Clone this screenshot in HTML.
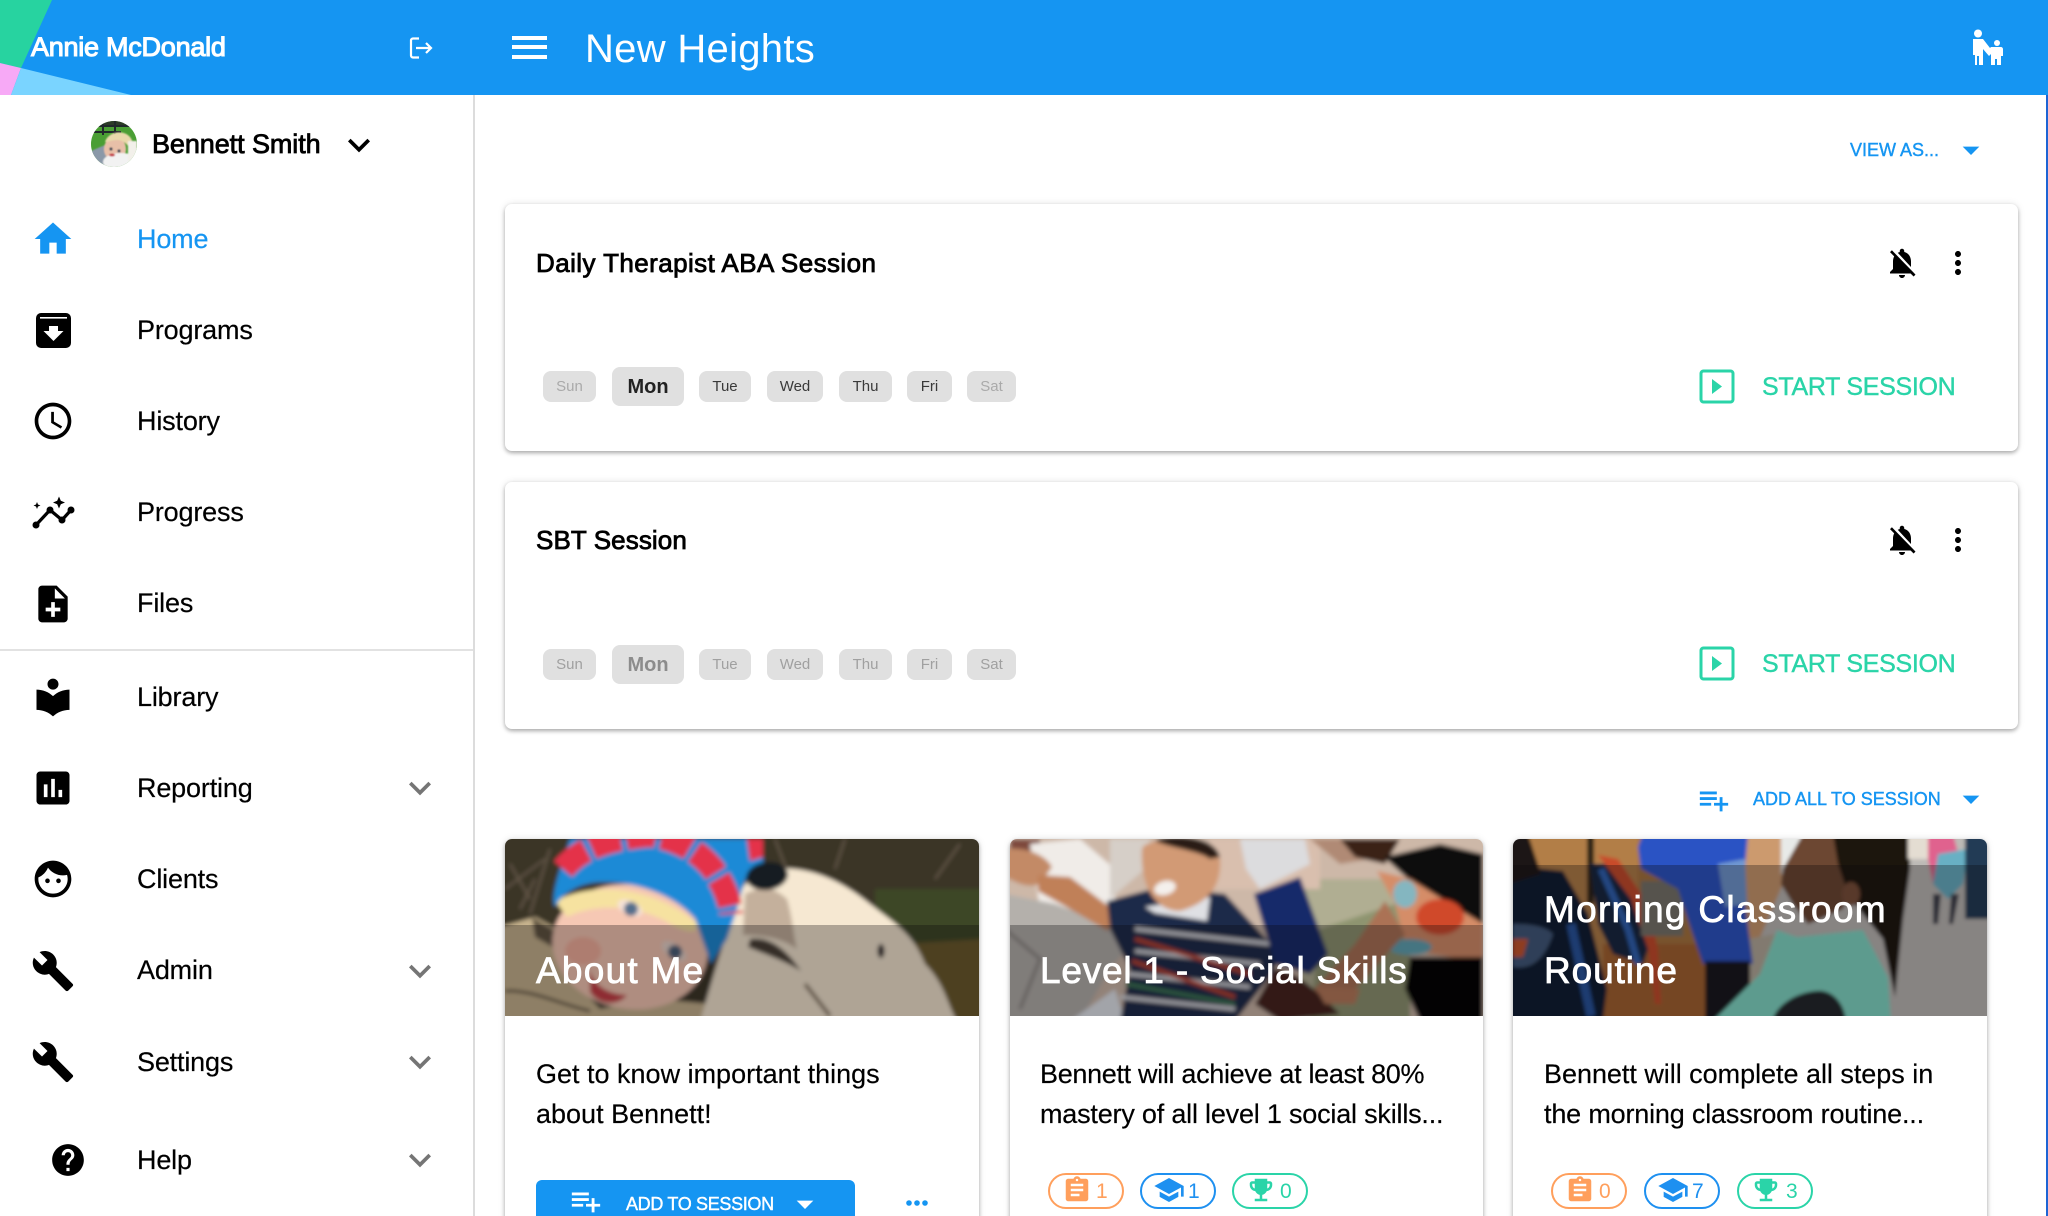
<!DOCTYPE html>
<html lang="en"><head><meta charset="utf-8"><title>New Heights</title>
<style>
html,body{margin:0;padding:0;width:2048px;height:1216px;overflow:hidden;background:#fff}
#w{position:absolute;left:0;top:0;width:2048px;height:1216px;overflow:hidden;font-family:"Liberation Sans",sans-serif;color:#000;filter:blur(.35px)}
.t{position:absolute;white-space:nowrap;line-height:40px;height:40px}
svg{position:absolute;display:block}
.nav{left:137px;font-size:27px;color:#000;letter-spacing:-.17px;-webkit-text-stroke:.2px currentColor}
.card{position:absolute;background:#fff;border-radius:7px;box-shadow:0 2px 4px rgba(0,0,0,.3),0 0 8px rgba(0,0,0,.1)}
.d{position:absolute;background:#e0e0e0;border-radius:8px;height:31px;line-height:31px;text-align:center;font-size:15px;color:#3a3a3a}
.d.o{color:#aaa}
.d.b{height:39px;line-height:41px;font-size:20px;font-weight:700;color:#222;border-radius:8px}
.g .d{color:#a0a0a0}.g .d.b{color:#8c8c8c}
.start{font-size:25px;color:#2ad4a8;left:1762px;letter-spacing:-.3px;-webkit-text-stroke:.4px #2ad4a8}
.bl{color:#1595f2}
.ic{position:absolute;left:0;top:0;width:100%;height:100%}
.img{position:absolute;overflow:hidden;border-radius:7px 7px 0 0;height:177px;top:839px}
.ov{position:absolute;left:0;right:0;bottom:0;background:rgba(10,5,10,.3)}
.h{position:absolute;color:#fff;font-size:37px;line-height:60px;white-space:nowrap;letter-spacing:.9px;-webkit-text-stroke:.8px #fff}
.p{position:absolute;font-size:27px;line-height:40px;color:#000;white-space:nowrap;-webkit-text-stroke:.18px #000}
.pill{position:absolute;top:1173px;height:32px;width:72px;border:2px solid;border-radius:18px}
.pill span{position:absolute;top:0;font-size:21px;line-height:33px}
</style></head><body><div id="w">

<!-- HEADER -->
<div style="position:absolute;left:0;top:0;width:2048px;height:95px;background:#1595f2"></div>
<svg style="left:0;top:0" width="140" height="95"><polygon points="0,0 52,0 21,68 0,63" fill="#27d3a0"/><polygon points="0,63 21,68 11,95 0,95" fill="#f7a9f6"/><polygon points="21,68 131,95 11,95" fill="#7ad4ff"/></svg>
<div class="t" style="left:31px;top:27px;color:#fff;font-size:27px;letter-spacing:-.25px;-webkit-text-stroke:1.1px #fff">Annie McDonald</div>
<svg style="left:408px;top:36px" width="26" height="24" viewBox="0 0 26 24" fill="none" stroke="#fff" stroke-width="2.2"><path d="M11 2.5H5a2 2 0 0 0-2 2v15a2 2 0 0 0 2 2h6"/><path d="M8 12h15M18 7l5 5-5 5"/></svg>
<div style="position:absolute;left:512px;top:36px;width:35px;height:4px;background:#fff"></div>
<div style="position:absolute;left:512px;top:45px;width:35px;height:4px;background:#fff"></div>
<div style="position:absolute;left:512px;top:55px;width:35px;height:4px;background:#fff"></div>
<div class="t" style="left:585px;top:29px;color:#fff;font-size:40px;letter-spacing:.3px">New Heights</div>
<svg style="left:1970px;top:28px" width="36" height="38" viewBox="0 0 36 38" fill="#fff"><circle cx="8" cy="5.5" r="4"/><circle cx="27" cy="15" r="3"/><path d="M3 11h10l7 9 1-1h10c1 0 2 1 2 2v7h-2v9h-4v-6h-2v6h-4V26l-2 2-6-7v16h-4v-9h-2v9H5V27H3z"/></svg>

<!-- SIDEBAR -->
<div style="position:absolute;left:473px;top:95px;width:2px;height:1121px;background:#dcdcdc"></div>
<div style="position:absolute;left:0;top:649px;width:473px;height:2px;background:#e2e2e2"></div>
<div style="position:absolute;left:2046px;top:95px;width:2px;height:1121px;background:#1d64d4"></div>

<svg style="left:91px;top:121px" width="46" height="46" viewBox="0 0 46 46"><defs><clipPath id="av"><circle cx="23" cy="23" r="23"/></clipPath><filter id="fa"><feGaussianBlur stdDeviation=".8"/></filter></defs><g clip-path="url(#av)"><rect width="46" height="46" fill="#4a9e34"/><rect width="46" height="6" fill="#2c3a28"/><path d="M0 5h46M0 11h30M12 0v14M24 0v14" stroke="#20282a" stroke-width="2"/><g filter="url(#fa)"><path d="M0 30l14-6 8 22H0z" fill="#8a98a8"/><ellipse cx="24" cy="28" rx="11" ry="12" fill="#e8bfa8"/><path d="M14 21c3-10 18-13 25-5 4 5 3 10 1 14-3-7-8-11-14-11-5 0-8 2-12 2z" fill="#e8d8aa"/><ellipse cx="30" cy="41" rx="18" ry="9" fill="#f2f2f2"/><path d="M37 20h9v20h-9z" fill="#f2f0ea"/><circle cx="20" cy="28" r="1.600" fill="#345"/><circle cx="28" cy="30" r="1.600" fill="#345"/><ellipse cx="21" cy="34" rx="3" ry="1.500" fill="#c4404a"/></g></g></svg>
<div class="t" style="left:152px;top:124px;font-size:27px;letter-spacing:-.08px;color:#000;-webkit-text-stroke:.8px #000">Bennett Smith</div>
<svg style="left:337px;top:123px" width="44" height="44" viewBox="0 0 24 24" fill="#000"><path d="M16.590 8.590L12 13.170 7.410 8.590 6 10l6 6 6-6z"/></svg>

<svg style="left:31px;top:217px" width="44" height="44" viewBox="0 0 24 24" fill="#1595f2"><path d="M10 20v-6h4v6h5v-8h3L12 3 2 12h3v8z"/></svg>
<div class="t nav" style="top:219px;color:#1595f2">Home</div>

<svg style="left:36px;top:313px" width="35" height="35" viewBox="0 0 35 35"><rect width="35" height="35" rx="5" fill="#000"/><rect x="4" y="4" width="27" height="1.600" fill="#fff"/><path d="M13 15h9v5h5.500l-10 10-10-10H13z" fill="#fff" transform="translate(0,-2)"/></svg>
<div class="t nav" style="top:310px">Programs</div>

<svg style="left:31px;top:399px" width="44" height="44" viewBox="0 0 24 24" fill="#000"><path d="M11.990 2C6.470 2 2 6.480 2 12s4.470 10 9.990 10C17.520 22 22 17.520 22 12S17.520 2 11.990 2zM12 20c-4.420 0-8-3.580-8-8s3.580-8 8-8 8 3.580 8 8-3.580 8-8 8zm.5-13H11v6l5.250 3.150.75-1.230-4.500-2.670z"/></svg>
<div class="t nav" style="top:401px">History</div>

<svg style="left:31px;top:494px" width="44" height="36" viewBox="0 0 44 36" fill="#000"><path d="M5 31L19 16l12 10 9-10" fill="none" stroke="#000" stroke-width="3.200"/><circle cx="5" cy="31" r="3.500"/><circle cx="19" cy="16" r="3.500"/><circle cx="31" cy="26" r="3.500"/><circle cx="40" cy="16" r="3.500"/><path d="M28 2.500l1.800 4.200 4.200 1.800-4.200 1.800L28 14.500l-1.800-4.200-4.200-1.800 4.200-1.800z"/><path d="M6 8l1 2.500 2.500 1L7 12.500 6 15l-1-2.500-2.500-1 2.500-1z"/></svg>
<div class="t nav" style="top:492px">Progress</div>

<svg style="left:31px;top:582px" width="44" height="44" viewBox="0 0 24 24" fill="#000"><path d="M14 2H6c-1.100 0-1.990.9-1.990 2L4 20c0 1.100.89 2 1.990 2H18c1.100 0 2-.9 2-2V8l-6-6zm2 14h-3v3h-2v-3H8v-2h3v-3h2v3h3v2zm-3-7V3.500L18.500 9H13z"/></svg>
<div class="t nav" style="top:583px">Files</div>

<svg style="left:31px;top:675px" width="44" height="44" viewBox="0 0 24 24" fill="#000"><path d="M12 11.550C9.640 9.350 6.480 8 3 8v11c3.480 0 6.640 1.350 9 3.550 2.360-2.190 5.520-3.550 9-3.550V8c-3.480 0-6.640 1.350-9 3.550zM12 8c1.660 0 3-1.340 3-3s-1.340-3-3-3-3 1.340-3 3 1.340 3 3 3z"/></svg>
<div class="t nav" style="top:677px">Library</div>

<svg style="left:31px;top:766px" width="44" height="44" viewBox="0 0 24 24" fill="#000"><path d="M19 3H5c-1.100 0-2 .9-2 2v14c0 1.100.9 2 2 2h14c1.100 0 2-.9 2-2V5c0-1.100-.9-2-2-2zM9 17H7v-7h2v7zm4 0h-2V7h2v10zm4 0h-2v-4h2v4z"/></svg>
<div class="t nav" style="top:768px">Reporting</div>
<svg style="left:398px;top:766px" width="44" height="44" viewBox="0 0 24 24" fill="#757575"><path d="M16.590 8.590L12 13.170 7.410 8.590 6 10l6 6 6-6z"/></svg>

<svg style="left:31px;top:857px" width="44" height="44" viewBox="0 0 24 24" fill="#000"><path d="M9 11.750c-.69 0-1.250.56-1.250 1.250s.56 1.250 1.250 1.250 1.250-.56 1.250-1.250-.56-1.250-1.250-1.250zm6 0c-.69 0-1.250.56-1.250 1.250s.56 1.250 1.250 1.250 1.250-.56 1.250-1.250-.56-1.250-1.250-1.250zM12 2C6.480 2 2 6.480 2 12s4.480 10 10 10 10-4.480 10-10S17.520 2 12 2zm0 18c-4.410 0-8-3.590-8-8 0-.29.02-.58.05-.86 2.360-1.050 4.230-2.980 5.210-5.370C11.070 8.330 14.050 10 17.420 10c.78 0 1.530-.09 2.250-.26.21.71.33 1.470.33 2.260 0 4.410-3.590 8-8 8z"/></svg>
<div class="t nav" style="top:859px">Clients</div>

<svg style="left:31px;top:949px" width="44" height="44" viewBox="0 0 24 24" fill="#000"><path d="M22.700 19l-9.100-9.100c.9-2.300.4-5-1.500-6.900-2-2-5-2.400-7.400-1.300L9 6 6 9 1.600 4.700C.4 7.100.9 10.100 2.900 12.100c1.900 1.900 4.600 2.400 6.900 1.500l9.100 9.100c.4.4 1 .4 1.400 0l2.300-2.300c.5-.4.5-1.100.1-1.400z"/></svg>
<div class="t nav" style="top:950px">Admin</div>
<svg style="left:398px;top:949px" width="44" height="44" viewBox="0 0 24 24" fill="#757575"><path d="M16.590 8.590L12 13.170 7.410 8.590 6 10l6 6 6-6z"/></svg>

<svg style="left:31px;top:1040px" width="44" height="44" viewBox="0 0 24 24" fill="#000"><path d="M22.700 19l-9.100-9.100c.9-2.300.4-5-1.500-6.900-2-2-5-2.400-7.400-1.300L9 6 6 9 1.600 4.700C.4 7.100.9 10.100 2.900 12.100c1.900 1.900 4.600 2.400 6.900 1.500l9.100 9.100c.4.4 1 .4 1.400 0l2.300-2.300c.5-.4.500-1.100.1-1.400z"/></svg>
<div class="t nav" style="top:1042px">Settings</div>
<svg style="left:398px;top:1040px" width="44" height="44" viewBox="0 0 24 24" fill="#757575"><path d="M16.590 8.590L12 13.170 7.410 8.590 6 10l6 6 6-6z"/></svg>

<svg style="left:49px;top:1141px" width="38" height="38" viewBox="0 0 24 24" fill="#000"><path d="M12 2C6.480 2 2 6.480 2 12s4.480 10 10 10 10-4.480 10-10S17.520 2 12 2zm1 17h-2v-2h2v2zm2.070-7.750l-.9.92C13.450 12.900 13 13.500 13 15h-2v-.5c0-1.100.45-2.100 1.170-2.830l1.240-1.260c.37-.36.59-.86.59-1.410 0-1.100-.9-2-2-2s-2 .9-2 2H8c0-2.210 1.790-4 4-4s4 1.790 4 4c0 .88-.36 1.680-.93 2.250z"/></svg>
<div class="t nav" style="top:1140px">Help</div>
<svg style="left:398px;top:1138px" width="44" height="44" viewBox="0 0 24 24" fill="#757575"><path d="M16.590 8.590L12 13.170 7.410 8.590 6 10l6 6 6-6z"/></svg>

<!-- TOP ACTION -->
<div class="t bl" style="left:1850px;top:130px;font-size:18px;-webkit-text-stroke:.4px #1595f2">VIEW AS...</div>
<svg style="left:1951px;top:130px" width="40" height="40" viewBox="0 0 24 24" fill="#1595f2"><path d="M7 10l5 5 5-5z"/></svg>

<!-- SESSION CARD 1 -->
<div class="card" style="left:505px;top:204px;width:1513px;height:247px"></div>
<div class="t" style="left:536px;top:243px;font-size:26px;letter-spacing:.42px;color:#000;-webkit-text-stroke:.8px #000">Daily Therapist ABA Session</div>
<svg style="left:1884px;top:245px" width="36" height="36" viewBox="0 0 24 24" fill="#000"><path d="M20 18.690L7.840 6.140 5.270 3.490 4 4.760l2.800 2.800v.01c-.52.99-.8 2.160-.8 3.420v5l-2 2v1h13.730l2 2L21 19.720l-1-1.030zM12 22c1.110 0 2-.89 2-2h-4c0 1.110.89 2 2 2zm6-7.320V11c0-3.080-1.640-5.640-4.500-6.320V4c0-.83-.67-1.500-1.500-1.500s-1.500.67-1.500 1.500v.68c-.15.03-.29.08-.42.120-.1.03-.2.07-.3.11h-.01c-.2.08-.4.18-.59.28-.01 0-.01 0-.02.01L18 14.680z"/></svg>
<svg style="left:1940px;top:245px" width="36" height="36" viewBox="0 0 24 24" fill="#000"><path d="M12 8c1.100 0 2-.9 2-2s-.9-2-2-2-2 .9-2 2 .9 2 2 2zm0 2c-1.100 0-2 .9-2 2s.9 2 2 2 2-.9 2-2-.9-2-2-2zm0 6c-1.100 0-2 .9-2 2s.9 2 2 2 2-.9 2-2-.9-2-2-2z"/></svg>
<div>
<div class="d o" style="left:543px;top:371px;width:53px">Sun</div>
<div class="d b" style="left:612px;top:367px;width:72px">Mon</div>
<div class="d" style="left:699px;top:371px;width:52px">Tue</div>
<div class="d" style="left:767px;top:371px;width:56px">Wed</div>
<div class="d" style="left:839px;top:371px;width:53px">Thu</div>
<div class="d" style="left:907px;top:371px;width:45px">Fri</div>
<div class="d o" style="left:967px;top:371px;width:49px">Sat</div>
</div>
<svg style="left:1699px;top:369px" width="36" height="35" viewBox="0 0 36 35"><rect x="2" y="2" width="32" height="31" rx="2.500" fill="none" stroke="#2ad4a8" stroke-width="3"/><path d="M13 10l10 7.500L13 25z" fill="#2ad4a8"/></svg>
<div class="t start" style="top:367px">START SESSION</div>

<!-- SESSION CARD 2 -->
<div class="card" style="left:505px;top:482px;width:1513px;height:247px"></div>
<div class="t" style="left:536px;top:520px;font-size:26px;letter-spacing:.1px;color:#000;-webkit-text-stroke:.8px #000">SBT Session</div>
<svg style="left:1884px;top:522px" width="36" height="36" viewBox="0 0 24 24" fill="#000"><path d="M20 18.690L7.840 6.140 5.270 3.490 4 4.760l2.800 2.800v.01c-.52.99-.8 2.160-.8 3.420v5l-2 2v1h13.730l2 2L21 19.720l-1-1.030zM12 22c1.110 0 2-.89 2-2h-4c0 1.110.89 2 2 2zm6-7.320V11c0-3.080-1.640-5.640-4.500-6.320V4c0-.83-.67-1.500-1.500-1.500s-1.500.67-1.500 1.500v.68c-.15.03-.29.08-.42.120-.1.03-.2.07-.3.11h-.01c-.2.08-.4.18-.59.28-.01 0-.01 0-.02.01L18 14.680z"/></svg>
<svg style="left:1940px;top:522px" width="36" height="36" viewBox="0 0 24 24" fill="#000"><path d="M12 8c1.100 0 2-.9 2-2s-.9-2-2-2-2 .9-2 2 .9 2 2 2zm0 2c-1.100 0-2 .9-2 2s.9 2 2 2 2-.9 2-2-.9-2-2-2zm0 6c-1.100 0-2 .9-2 2s.9 2 2 2 2-.9 2-2-.9-2-2-2z"/></svg>
<div class="g">
<div class="d" style="left:543px;top:649px;width:53px">Sun</div>
<div class="d b" style="left:612px;top:645px;width:72px">Mon</div>
<div class="d" style="left:699px;top:649px;width:52px">Tue</div>
<div class="d" style="left:767px;top:649px;width:56px">Wed</div>
<div class="d" style="left:839px;top:649px;width:53px">Thu</div>
<div class="d" style="left:907px;top:649px;width:45px">Fri</div>
<div class="d" style="left:967px;top:649px;width:49px">Sat</div>
</div>
<svg style="left:1699px;top:646px" width="36" height="35" viewBox="0 0 36 35"><rect x="2" y="2" width="32" height="31" rx="2.500" fill="none" stroke="#2ad4a8" stroke-width="3"/><path d="M13 10l10 7.500L13 25z" fill="#2ad4a8"/></svg>
<div class="t start" style="top:644px">START SESSION</div>

<!-- ADD ALL -->
<svg style="left:1697px;top:783px" width="34" height="34" viewBox="0 0 24 24" fill="#1595f2"><path d="M14 10H2v2h12v-2zm0-4H2v2h12V6zm4 8v-4h-2v4h-4v2h4v4h2v-4h4v-2h-4zM2 16h8v-2H2v2z"/></svg>
<div class="t bl" style="left:1753px;top:779px;font-size:18px;-webkit-text-stroke:.4px #1595f2">ADD ALL TO SESSION</div>
<svg style="left:1951px;top:779px" width="40" height="40" viewBox="0 0 24 24" fill="#1595f2"><path d="M7 10l5 5 5-5z"/></svg>

<!-- PROGRAM CARDS -->
<div class="card" style="left:505px;top:839px;width:474px;height:420px"></div>
<div class="card" style="left:1010px;top:839px;width:473px;height:420px"></div>
<div class="card" style="left:1513px;top:839px;width:474px;height:420px"></div>

<!-- IMAGE 1 -->
<div class="img" style="left:505px;width:474px">
<svg class="ic" viewBox="0 0 474 177" preserveAspectRatio="none"><defs><filter id="b1" x="-5%" y="-5%" width="110%" height="110%"><feGaussianBlur stdDeviation="2"/></filter></defs><g filter="url(#b1)">
<rect x="-5" y="-5" width="484" height="187" fill="#3a3428"/>
<rect x="370" y="50" width="110" height="75" fill="#3d4626"/>
<polygon points="395,105 480,100 480,182 440,182" fill="#6a5a2c"/>
<path d="M0 50L40 20M25 75L45 10M270 0L285 40M330 30L340 0M430 40L455 5M15 70L30 40M5 25L25 60" stroke="#66594a" stroke-width="2" fill="none"/>
<path d="M-5 88L30 78L55 92L72 145L95 170L150 160L205 165L210 182L-5 182Z" fill="#c8b48e"/>
<path d="M0 152C25 150 55 165 85 172" stroke="#3a3024" stroke-width="2.500" fill="none"/>
<path d="M27 78L50 92L60 115L30 98Z" fill="#5e5240"/>
<path d="M222 95C228 60 240 36 262 30C300 26 332 38 365 65C392 86 408 95 420 125C440 145 442 165 452 182L195 182C205 150 212 122 222 95Z" fill="#f6e8d2"/>
<ellipse cx="125" cy="108" rx="78" ry="62" fill="#f6c8b4" transform="rotate(10 125 108)"/>
<path d="M50 62C95 40 150 50 192 84C194 100 174 90 160 82C130 66 90 64 62 78Z" fill="#f6e2a0"/>
<path d="M50 68C46 58 52 38 65 0L258 0L258 25L240 40L232 70L222 100L206 125L197 100L190 80C170 56 130 42 95 43C75 44 58 53 50 68Z" fill="#1c8ad6"/>
<path d="M58 30C75 10 100 0 145 -4C170 0 192 10 208 30C218 45 225 60 226 75" fill="none" stroke="#e4304a" stroke-width="24" stroke-dasharray="30 6"/>
<path d="M242 0L258 0L258 18L245 22Z" fill="#e4304a"/>
<ellipse cx="125" cy="69" rx="13" ry="7" fill="#f6e2d8" transform="rotate(25 125 69)"/>
<circle cx="126" cy="70" r="7" fill="#556e8c"/>
<ellipse cx="169" cy="112" rx="14" ry="7" fill="#e9d6cc" transform="rotate(35 169 112)"/>
<circle cx="170" cy="113" r="7" fill="#4a5e78"/>
<path d="M85 130C88 145 100 155 122 156C115 166 95 168 85 153Z" fill="#c83c44"/>
<ellipse cx="78" cy="112" rx="18" ry="14" fill="#f5b09c"/>
<path d="M240 55C255 48 265 45 282 60C288 80 288 95 292 110C278 100 262 96 238 96Z" fill="#c4b09c"/>
<ellipse cx="262" cy="37" rx="21" ry="14" fill="#141a24" transform="rotate(-8 262 37)"/>
<path d="M245 100C262 97 280 108 296 132C280 122 262 116 243 108Z" fill="#4a4036"/>
<path d="M300 145L325 177" stroke="#8a7a65" stroke-width="4"/>
<ellipse cx="376" cy="112" rx="3.500" ry="7" fill="#221f22"/>
</g></svg>
<div class="ov" style="height:91px"></div>
</div>
<div class="h" style="left:536px;top:941px;letter-spacing:1.25px">About Me</div>

<!-- IMAGE 2 -->
<div class="img" style="left:1010px;width:473px">
<svg class="ic" viewBox="0 0 473 177" preserveAspectRatio="none"><defs><filter id="b2" x="-5%" y="-5%" width="110%" height="110%"><feGaussianBlur stdDeviation="2"/></filter></defs><g filter="url(#b2)">
<rect x="-5" y="-5" width="483" height="187" fill="#cdb8a8"/>
<rect x="290" y="40" width="100" height="140" fill="#b0ae92"/>
<polygon points="310,90 400,60 400,182 300,182" fill="#8e9470"/>
<rect x="200" y="0" width="110" height="50" fill="#d9bfae"/>
<rect x="0" y="0" width="30" height="12" fill="#7e4a3c"/>
<path d="M20 5L70 0L105 30L105 75L30 70Z" fill="#f0ece8"/>
<path d="M100 0L140 0L135 30L100 60Z" fill="#d6cfc8"/>
<path d="M-5 55L45 65L100 85L125 100L100 130L70 182L-5 182Z" fill="#b4b0ab"/>
<path d="M-5 90L30 120L10 170" stroke="#86827e" stroke-width="3" fill="none"/>
<polygon points="60,182 105,150 115,182" fill="#e4e8ee"/>
<path d="M-5 10C15 8 35 15 42 28L30 45C15 50 5 42-5 38Z" fill="#c38a66"/>
<path d="M28 36L60 38L105 72L98 92L60 70L28 52Z" fill="#c08058"/>
<path d="M97 62L150 48L215 55L270 115L262 135L225 182L110 182L120 130L100 90Z" fill="#1c2a4a"/>
<path d="M125 90L262 105M125 112L250 125M118 135L240 148M110 158L225 170" stroke="#d9dadf" stroke-width="4" fill="none"/>
<path d="M125 100L240 135M122 122L225 158" stroke="#c24428" stroke-width="4" fill="none"/>
<path d="M116 145L225 165" stroke="#3c7a55" stroke-width="4" fill="none"/>
<path d="M135 68L200 58L197 82L145 74Z" fill="#dfe0e4"/>
<path d="M132 10C133-2 205-5 210 20C212 50 195 65 170 72C150 72 130 55 132 10Z" fill="#d29a74"/>
<path d="M145 2C155-6 205-5 210 18L200 20C190 12 165 10 145 2Z" fill="#2a1a12"/>
<ellipse cx="155" cy="49" rx="11" ry="7" fill="#f4f0ec" transform="rotate(-15 155 49)"/>
<path d="M230 0H295L300 25L250 50L236 30Z" fill="#dcdcde"/>
<path d="M244 55L290 38L318 115L300 135L265 125Z" fill="#16296a"/>
<path d="M300 0L370 0L360 20L330 25Z" fill="#b08a75"/>
<path d="M330 0L390 0L375 25L345 18Z" fill="#3a2418"/>
<path d="M374 18L430 5L473 15L473 90L420 60Z" fill="#0e0a0a"/>
<path d="M367 32L400 40L473 85L473 122L420 115L395 105L385 65Z" fill="#d58d68"/>
<ellipse cx="430" cy="78" rx="24" ry="18" fill="#d0492a"/>
<ellipse cx="395" cy="55" rx="12" ry="14" fill="#84b6c0"/>
<ellipse cx="400" cy="108" rx="22" ry="8" fill="#5ea5b5"/>
<path d="M375 62L395 95L345 150L310 165L300 155L345 105Z" fill="#ab7254"/>
<path d="M400 118L473 118L473 182L410 182L395 150Z" fill="#060606"/>
<path d="M265 130C285 130 310 155 330 175L270 182L245 165Z" fill="#45241a"/>
<path d="M305 148L350 150L345 165L315 165Z" fill="#b87a5a"/>
</g></svg>
<div class="ov" style="height:91px"></div>
</div>
<div class="h" style="left:1040px;top:941px;letter-spacing:.78px">Level 1 - Social Skills</div>

<!-- IMAGE 3 -->
<div class="img" style="left:1513px;width:474px">
<svg class="ic" viewBox="0 0 474 177" preserveAspectRatio="none"><defs><filter id="b3" x="-5%" y="-5%" width="110%" height="110%"><feGaussianBlur stdDeviation="1.800"/></filter></defs><g filter="url(#b3)">
<rect x="-5" y="-5" width="484" height="187" fill="#bdbab6"/>
<rect x="-5" y="-5" width="135" height="187" fill="#b27e46"/>
<rect x="74" y="-5" width="7" height="70" fill="#2c2014"/>
<rect x="125" y="-5" width="115" height="187" fill="#a8743e"/>
<rect x="90" y="105" width="150" height="77" fill="#a4622e"/>
<polygon points="225,-5 272,-5 272,40 240,115 240,150 225,130" fill="#cc9a6e"/>
<polygon points="235,100 262,95 245,150 235,140" fill="#b6ad9c"/>
<rect x="268" y="-5" width="60" height="40" fill="#e8eae8"/>
<path d="M-5 15L12 28L50 32L75 75L94 150L90 182L-5 182Z" fill="#0e1c30"/>
<path d="M-5 -5L15 -5L28 35L-5 45Z" fill="#1a1712"/>
<path d="M58 85L78 177" stroke="#2a5cb0" stroke-width="9" opacity=".85"/>
<path d="M0 85C25 85 35 90 40 95C30 125 15 130 0 128Z" fill="#41587a"/>
<path d="M0 100L15 100L10 118L0 118Z" fill="#c8552c"/>
<path d="M77 25L95 25L125 65L137 105L130 125L100 115L85 85Z" fill="#132540"/>
<path d="M88 30L115 90L125 125" stroke="#2d62b4" stroke-width="7" fill="none"/>
<path d="M85 16L105 20L135 65L145 110L148 165L142 165L135 110L118 60Z" fill="#c84c2c"/>
<rect x="128" y="42" width="42" height="55" fill="#77756a"/>
<path d="M125 8L130 -5L235 -5L230 50L240 125L190 125L178 90L165 50L128 30Z" fill="#2c52c4"/>
<path d="M205 25L232 20L234 65L212 68Z" fill="#6f98d2"/>
<rect x="192" y="122" width="45" height="60" fill="#13141e"/>
<path d="M200 182L247 135L264 91L284 98L350 91L375 138L378 182Z" fill="#82dcc8"/>
<path d="M290 -5L345 -5L340 40L330 70L295 85L280 65L268 45L270 30Z" fill="#6c4632"/>
<path d="M320 -5L397 -5L397 30L390 80L382 158L370 100L350 75L335 55L325 25Z" fill="#1a140f"/>
<ellipse cx="338" cy="55" rx="9" ry="12" fill="#7a4f38"/>
<path d="M259 182C265 160 295 150 310 152C325 155 332 170 333 182Z" fill="#23252a"/>
<path d="M410 -5L440 -5L448 25L440 50L420 45Z" fill="#e0628e"/>
<path d="M425 15L455 10L450 45L435 60L420 45Z" fill="#68b0c4"/>
<path d="M420 55L428 55L425 85L420 85ZM438 55L446 55L440 85L436 85Z" fill="#3a3c48"/>
<rect x="452" y="-5" width="28" height="85" fill="#223a54"/>
<rect x="395" y="-5" width="20" height="25" fill="#e4ddd2"/>
</g></svg>
<div class="ov" style="height:151px"></div>
</div>
<div class="h" style="left:1544px;top:880px;letter-spacing:1.3px">Morning Classroom</div>
<div class="h" style="left:1544px;top:941px">Routine</div>

<!-- CARD BODIES -->
<div class="p" style="left:536px;top:1054px;letter-spacing:0">Get to know important things<br>about Bennett!</div>
<div class="p" style="left:1040px;top:1054px"><span style="letter-spacing:-.32px">Bennett will achieve at least 80%</span><br><span style="letter-spacing:-.2px">mastery of all level 1 social skills...</span></div>
<div class="p" style="left:1544px;top:1054px"><span style="letter-spacing:-.03px">Bennett will complete all steps in</span><br><span style="letter-spacing:-.18px">the morning classroom routine...</span></div>

<!-- BUTTON -->
<div style="position:absolute;left:536px;top:1180px;width:319px;height:50px;background:#1595f2;border-radius:6px"></div>
<svg style="left:569px;top:1184px" width="34" height="34" viewBox="0 0 24 24" fill="#fff"><path d="M14 10H2v2h12v-2zm0-4H2v2h12V6zm4 8v-4h-2v4h-4v2h4v4h2v-4h4v-2h-4zM2 16h8v-2H2v2z"/></svg>
<div class="t" style="left:626px;top:1184px;font-size:18px;color:#fff;letter-spacing:-.33px;-webkit-text-stroke:.4px #fff">ADD TO SESSION</div>
<svg style="left:785px;top:1184px" width="40" height="40" viewBox="0 0 24 24" fill="#fff"><path d="M7 10l5 5 5-5z"/></svg>
<svg style="left:904px;top:1197px" width="26" height="12" viewBox="0 0 26 12" fill="#1595f2"><circle cx="5" cy="6" r="2.800"/><circle cx="13" cy="6" r="2.800"/><circle cx="21" cy="6" r="2.800"/></svg>

<!-- PILLS CARD 2 -->
<div class="pill" style="left:1048px;border-color:#ff9f5c;color:#ff9f5c"><svg style="left:12px;top:0" width="30" height="30" viewBox="0 0 24 24" fill="#ff9f5c"><path d="M19 3h-4.180C14.400 1.840 13.300 1 12 1c-1.300 0-2.400.84-2.820 2H5c-1.100 0-2 .9-2 2v14c0 1.100.9 2 2 2h14c1.100 0 2-.9 2-2V5c0-1.100-.9-2-2-2zm-7 0c.55 0 1 .45 1 1s-.45 1-1 1-1-.45-1-1 .45-1 1-1zm2 14H7v-2h7v2zm3-4H7v-2h10v2zm0-4H7V7h10v2z"/></svg><span style="left:46px">1</span></div>
<div class="pill" style="left:1140px;border-color:#1e90f0;color:#1e90f0"><svg style="left:11px;top:-1px" width="32" height="32" viewBox="0 0 24 24" fill="#1e90f0"><path d="M5 13.180v4L12 21l7-3.820v-4L12 17l-7-3.820zM12 3L1 9l11 6 9-4.910V17h2V9L12 3z"/></svg><span style="left:46px">1</span></div>
<div class="pill" style="left:1232px;border-color:#2ad4a8;color:#2ad4a8"><svg style="left:12px;top:0" width="30" height="30" viewBox="0 0 24 24" fill="#2ad4a8"><path d="M19 5h-2V3H7v2H5c-1.100 0-2 .9-2 2v1c0 2.550 1.920 4.630 4.390 4.940.63 1.500 1.980 2.630 3.610 2.960V19H7v2h10v-2h-4v-3.100c1.630-.33 2.980-1.460 3.610-2.960C19.080 12.630 21 10.550 21 8V7c0-1.100-.9-2-2-2zM5 8V7h2v3.820C5.840 10.400 5 9.300 5 8zm14 0c0 1.300-.84 2.400-2 2.820V7h2v1z"/></svg><span style="left:46px">0</span></div>

<!-- PILLS CARD 3 -->
<div class="pill" style="left:1551px;border-color:#ff9f5c;color:#ff9f5c"><svg style="left:12px;top:0" width="30" height="30" viewBox="0 0 24 24" fill="#ff9f5c"><path d="M19 3h-4.180C14.400 1.840 13.300 1 12 1c-1.300 0-2.400.84-2.820 2H5c-1.100 0-2 .9-2 2v14c0 1.100.9 2 2 2h14c1.100 0 2-.9 2-2V5c0-1.100-.9-2-2-2zm-7 0c.55 0 1 .45 1 1s-.45 1-1 1-1-.45-1-1 .45-1 1-1zm2 14H7v-2h7v2zm3-4H7v-2h10v2zm0-4H7V7h10v2z"/></svg><span style="left:46px">0</span></div>
<div class="pill" style="left:1644px;border-color:#1e90f0;color:#1e90f0"><svg style="left:11px;top:-1px" width="32" height="32" viewBox="0 0 24 24" fill="#1e90f0"><path d="M5 13.180v4L12 21l7-3.820v-4L12 17l-7-3.820zM12 3L1 9l11 6 9-4.910V17h2V9L12 3z"/></svg><span style="left:46px">7</span></div>
<div class="pill" style="left:1737px;border-color:#2ad4a8;color:#2ad4a8"><svg style="left:12px;top:0" width="30" height="30" viewBox="0 0 24 24" fill="#2ad4a8"><path d="M19 5h-2V3H7v2H5c-1.100 0-2 .9-2 2v1c0 2.550 1.920 4.630 4.390 4.940.63 1.500 1.980 2.630 3.610 2.960V19H7v2h10v-2h-4v-3.100c1.630-.33 2.980-1.460 3.610-2.960C19.080 12.630 21 10.550 21 8V7c0-1.100-.9-2-2-2zM5 8V7h2v3.820C5.840 10.400 5 9.300 5 8zm14 0c0 1.300-.84 2.400-2 2.820V7h2v1z"/></svg><span style="left:47px">3</span></div>

</div></body></html>
